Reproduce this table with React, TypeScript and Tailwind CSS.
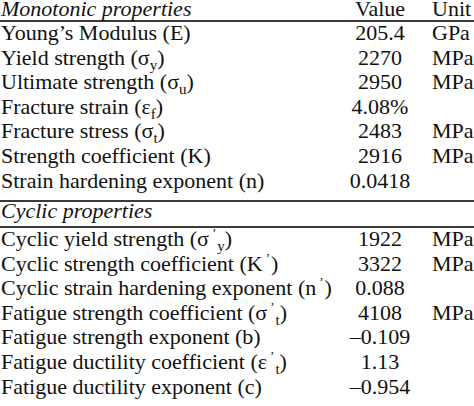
import React from "react";

type Row = { label: React.ReactNode; value: string; unit?: string };

// small helpers for the symbol marks
const Sub = ({ children }: { children: React.ReactNode }) => (
  <span className="relative top-[5px] text-[15px] leading-none">{children}</span>
);
const Prime = () => (
  <span className="relative -top-[9px] ml-[3px] mr-[1px] text-[13px] leading-none">’</span>
);

const monotonic: Row[] = [
  { label: <>Young’s Modulus (E)</>, value: "205.4", unit: "GPa" },
  { label: <>Yield strength (σ<Sub>y</Sub>)</>, value: "2270", unit: "MPa" },
  { label: <>Ultimate strength (σ<Sub>u</Sub>)</>, value: "2950", unit: "MPa" },
  { label: <>Fracture strain (ε<Sub>f</Sub>)</>, value: "4.08%" },
  { label: <>Fracture stress (σ<Sub>t</Sub>)</>, value: "2483", unit: "MPa" },
  { label: <>Strength coefficient (K)</>, value: "2916", unit: "MPa" },
  { label: <>Strain hardening exponent (n)</>, value: "0.0418" },
];

const cyclic: Row[] = [
  { label: <>Cyclic yield strength (σ<Prime /><Sub>y</Sub>)</>, value: "1922", unit: "MPa" },
  { label: <>Cyclic strength coefficient (K<Prime />)</>, value: "3322", unit: "MPa" },
  { label: <>Cyclic strain hardening exponent (n<Prime />)</>, value: "0.088" },
  { label: <>Fatigue strength coefficient (σ<Prime /><Sub>t</Sub>)</>, value: "4108", unit: "MPa" },
  { label: <>Fatigue strength exponent (b)</>, value: "–0.109" },
  { label: <>Fatigue ductility coefficient (ε<Prime /><Sub>t</Sub>)</>, value: "1.13" },
  { label: <>Fatigue ductility exponent (c)</>, value: "–0.954" },
];

function DataRow({ row }: { row: Row }) {
  return (
    <div className="grid grid-cols-[332px_96px_46px] h-[24.6px] leading-[22.5px] whitespace-nowrap">
      <div className="pl-[1px]">{row.label}</div>
      <div className="text-center">{row.value}</div>
      <div className="pl-[4px]">{row.unit}</div>
    </div>
  );
}

const Rule = () => <div className="h-[2px] bg-[#3a3a3a]" />;

export default function App() {
  return (
    <div className="w-[474px] h-[406px] overflow-hidden bg-white text-[#111] [font-family:'Liberation_Serif','Times_New_Roman',serif] text-[22px]">
      {/* header */}
      <div className="grid grid-cols-[332px_96px_46px] h-[20px] leading-[18px] whitespace-nowrap">
        <div className="pl-[1px] italic">Monotonic properties</div>
        <div className="text-center">Value</div>
        <div className="pl-[4px]">Unit</div>
      </div>
      <Rule />
      {monotonic.map((r, i) => (
        <DataRow key={i} row={r} />
      ))}
      <div className="h-[5.8px]" />
      <Rule />
      <div className="h-[24px] leading-[17px] pl-[1px] italic">Cyclic properties</div>
      <Rule />
      {cyclic.map((r, i) => (
        <DataRow key={i} row={r} />
      ))}
    </div>
  );
}
